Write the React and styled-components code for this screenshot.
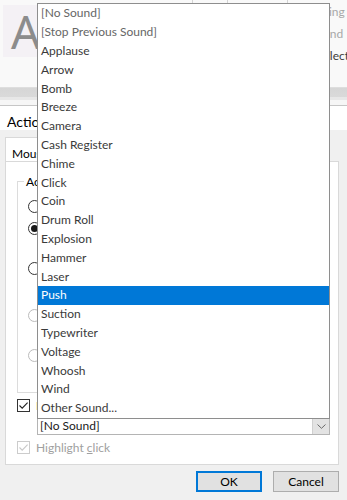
import React from 'react';
import styled, { createGlobalStyle } from 'styled-components';

const Global = createGlobalStyle`
  html, body { margin: 0; padding: 0; background: #f0f0f0; }
  body { font-family: Lato, "Noto Sans", sans-serif; font-size: 12px; color: #1e1e1e; }
  * { box-sizing: border-box; }
`;

const Screen = styled.div`
  width: 347px;
  height: 500px;
  overflow: hidden;
  display: flex;
  flex-direction: column;
  background: #f0f0f0;
`;

/* ---------- ribbon behind the dialog ---------- */
const Ribbon = styled.div`
  height: 88px;
  flex-shrink: 0;
  display: flex;
  background: #f9f9f9;
  border-bottom: 1px solid #dedede;
`;

const RibbonGroup = styled.div`
  width: ${(p) => p.$w}px;
  flex-shrink: 0;
  height: 80px;
  border-right: 1px solid #d4d4d4;
`;

const StyleGroup = styled(RibbonGroup)`
  padding: 5px 0 0 3px;
`;

const StyleTile = styled.div`
  width: 64px;
  height: 52px;
  background: #f4f1f5;
  color: #8c8c8c;
  font-family: "Noto Sans", sans-serif;
  font-size: 46px;
  line-height: 52px;
  padding-left: 8px;
`;

const ArrangeGroup = styled.div`
  flex: 1;
  display: flex;
  flex-direction: column;
  padding-left: 12px;
`;

const ArrangeRow = styled.div`
  height: 22px;
  display: flex;
  align-items: center;
  gap: 3px;
  white-space: nowrap;
  color: ${(p) => (p.$disabled ? '#a8a8a8' : '#3c3c3c')};
`;

const ArrangeIcon = styled.span`
  width: 14px;
  height: 14px;
  flex-shrink: 0;
  border: 1px solid ${(p) => (p.$disabled ? '#c4c4c4' : '#7a7a7a')};
  background: #fff;
`;

const Band = styled.div`
  height: 18px;
  flex-shrink: 0;
  background: linear-gradient(#d6d6d6 0, #d9d9d9 9px, #e7e7e7 9px, #e7e7e7 12px, #f6f6f6 12px);
  border-bottom: 1px solid #c6c6c6;
`;

/* ---------- dialog ---------- */
const Dialog = styled.div`
  flex: 1;
  display: flex;
  flex-direction: column;
  background: #f0f0f0;
`;

const TitleBar = styled.div`
  height: 24px;
  flex-shrink: 0;
  background: #fff;
  padding: 7px 0 0 7px;
  font-size: 14px;
  line-height: 17px;
  color: #000;
  white-space: nowrap;
`;

const TabStrip = styled.div`
  height: 31px;
  flex-shrink: 0;
  display: flex;
  align-items: flex-end;
  padding-left: 5px;
`;

const Tab = styled.div`
  width: ${(p) => p.$w}px;
  height: ${(p) => (p.$active ? 24 : 21)}px;
  padding: ${(p) => (p.$active ? 8 : 5)}px 6px 0 6px;
  line-height: 15px;
  background: ${(p) => (p.$active ? '#fff' : '#f0f0f0')};
  border: 1px solid #d9d9d9;
  border-bottom: none;
  color: #000;
  white-space: nowrap;
`;

const Panel = styled.div`
  height: 304px;
  flex-shrink: 0;
  margin: 0 8px 0 5px;
  background: #fff;
  border: 1px solid #d9d9d9;
  padding: 0 10px 0 11px;
  display: flex;
  flex-direction: column;
`;

const GroupBox = styled.div`
  position: relative;
  margin-top: 19px;
  border: 1px solid #dcdcdc;
  padding: 0 0 5px 10px;
  display: flex;
  flex-direction: column;
`;

const Legend = styled.span`
  position: absolute;
  top: -8px;
  left: 6px;
  padding: 0 2px;
  background: #fff;
  line-height: 15px;
  color: #000;
`;

const Option = styled.div`
  margin-top: ${(p) => p.$gap}px;
  display: flex;
  flex-direction: column;
`;

const OptionRow = styled.div`
  height: 13px;
  display: flex;
  align-items: center;
`;

const Radio = styled.span`
  width: 13px;
  height: 13px;
  flex-shrink: 0;
  border-radius: 50%;
  border: 1px solid ${(p) => (p.$disabled ? '#bcbcbc' : '#333')};
  background: #fff;
  display: flex;
  align-items: center;
  justify-content: center;
  &::after {
    content: '';
    width: 7px;
    height: 7px;
    border-radius: 50%;
    background: ${(p) => (p.$checked ? '#1a1a1a' : 'transparent')};
  }
`;

const Field = styled.div`
  margin: 4px 8px 0 20px;
  height: 21px;
  border: 1px solid ${(p) => (p.$disabled ? '#cccccc' : '#7a7a7a')};
  background: ${(p) => (p.$disabled ? '#f0f0f0' : '#fff')};
`;

const CheckRow = styled.label`
  margin-top: ${(p) => p.$gap}px;
  height: 13px;
  display: flex;
  align-items: center;
  gap: 6px;
  white-space: nowrap;
  color: ${(p) => (p.$disabled ? '#a0a0a0' : '#000')};
`;

const CheckBox = styled.span`
  width: 13px;
  height: 13px;
  flex-shrink: 0;
  border: 1px solid ${(p) => (p.$disabled ? '#cccccc' : '#333')};
  background: #fff;
  color: ${(p) => (p.$disabled ? '#c8c8c8' : '#222')};
  display: flex;
  align-items: center;
  justify-content: center;
`;

const Accel = styled.span`
  text-decoration: underline;
`;

const Combo = styled.div`
  position: relative;
  margin: 5px 0 0 20px;
  width: 293px;
  height: 18px;
  display: flex;
  border: 1px solid #b4b4b4;
  background: #fff;
`;

const ComboText = styled.div`
  flex: 1;
  padding-left: 2px;
  line-height: 16px;
  color: #1a1a1a;
`;

const ComboButton = styled.div`
  width: 17px;
  background: #e3e3e3;
  border-left: 1px solid #d0d0d0;
  display: flex;
  align-items: center;
  justify-content: center;
  color: #6a6a6a;
`;

const DropList = styled.ul`
  position: absolute;
  left: -1px;
  right: -1px;
  bottom: calc(100% - 1px);
  margin: 0;
  padding: 0;
  list-style: none;
  background: #fff;
  border: 1px solid #8e8e8e;
`;

const Item = styled.li`
  height: 18.8px;
  line-height: 18.8px;
  padding-left: 3px;
  white-space: nowrap;
  background: ${(p) => (p.$selected ? '#0078d7' : 'transparent')};
  color: ${(p) => (p.$selected ? '#fff' : p.$muted ? '#666' : '#3a3a3a')};
`;

const Footer = styled.div`
  display: flex;
  justify-content: flex-end;
  gap: 11px;
  padding: 6px 8px 0 0;
`;

const Button = styled.button`
  width: 66px;
  height: 21px;
  padding: 0;
  font-family: inherit;
  font-size: 12px;
  color: #000;
  background: #e1e1e1;
  border: ${(p) => (p.$default ? '2px solid #0078d7' : '1px solid #adadad')};
`;

const sounds = [
  '[No Sound]', '[Stop Previous Sound]', 'Applause', 'Arrow', 'Bomb', 'Breeze', 'Camera',
  'Cash Register', 'Chime', 'Click', 'Coin', 'Drum Roll', 'Explosion', 'Hammer', 'Laser',
  'Push', 'Suction', 'Typewriter', 'Voltage', 'Whoosh', 'Wind', 'Other Sound...',
];

/* radio options of the group; their labels lie under the open list */
const options = [
  { id: 'none', gap: 18, field: false },
  { id: 'hyperlink', gap: 9, field: true, checked: true },
  { id: 'program', gap: 2, field: true },
  { id: 'macro', gap: 9, field: true, disabled: true },
  { id: 'object', gap: 2, field: true, disabled: true },
];

const Tick = () => (
  <svg width="11" height="11" viewBox="0 0 11 11">
    <path d="M1.5 5.5 L4.2 8.2 L9.6 2.6" fill="none" stroke="currentColor" strokeWidth="1.1" />
  </svg>
);

const Chevron = () => (
  <svg width="9" height="5" viewBox="0 0 9 5">
    <path d="M0.5 0.5 L4.5 4.3 L8.5 0.5" fill="none" stroke="currentColor" strokeWidth="1" />
  </svg>
);

export default function App() {
  return (
    <Screen>
      <Global />
      <Ribbon>
        <StyleGroup $w={193}>
          <StyleTile>A</StyleTile>
        </StyleGroup>
        <RibbonGroup $w={35} />
        <RibbonGroup $w={60} />
        <ArrangeGroup>
          <ArrangeRow $disabled>
            <ArrangeIcon $disabled />
            Bring
          </ArrangeRow>
          <ArrangeRow $disabled>
            <ArrangeIcon $disabled />
            Send
          </ArrangeRow>
          <ArrangeRow>
            <ArrangeIcon />
            Select
          </ArrangeRow>
        </ArrangeGroup>
      </Ribbon>
      <Band />
      <Dialog>
        <TitleBar>Action Settings</TitleBar>
        <TabStrip>
          <Tab $active $w={80}>Mouse Click</Tab>
          <Tab $w={76} />
        </TabStrip>
        <Panel>
          <GroupBox>
            <Legend>Action on click</Legend>
            {options.map((o) => (
              <Option key={o.id} $gap={o.gap}>
                <OptionRow>
                  <Radio $checked={o.checked} $disabled={o.disabled} />
                </OptionRow>
                {o.field && <Field $disabled={o.disabled} />}
              </Option>
            ))}
          </GroupBox>
          <CheckRow $gap={6}>
            <CheckBox>
              <Tick />
            </CheckBox>
            Play sound:
          </CheckRow>
          <Combo>
            <ComboText>[No Sound]</ComboText>
            <ComboButton>
              <Chevron />
            </ComboButton>
            <DropList>
              {sounds.map((s, i) => (
                <Item key={s} $selected={s === 'Push'} $muted={i < 2}>
                  {s}
                </Item>
              ))}
            </DropList>
          </Combo>
          <CheckRow $gap={6} $disabled>
            <CheckBox $disabled>
              <Tick />
            </CheckBox>
            <span>
              Highlight <Accel>c</Accel>lick
            </span>
          </CheckRow>
        </Panel>
        <Footer>
          <Button $default>OK</Button>
          <Button>Cancel</Button>
        </Footer>
      </Dialog>
    </Screen>
  );
}
